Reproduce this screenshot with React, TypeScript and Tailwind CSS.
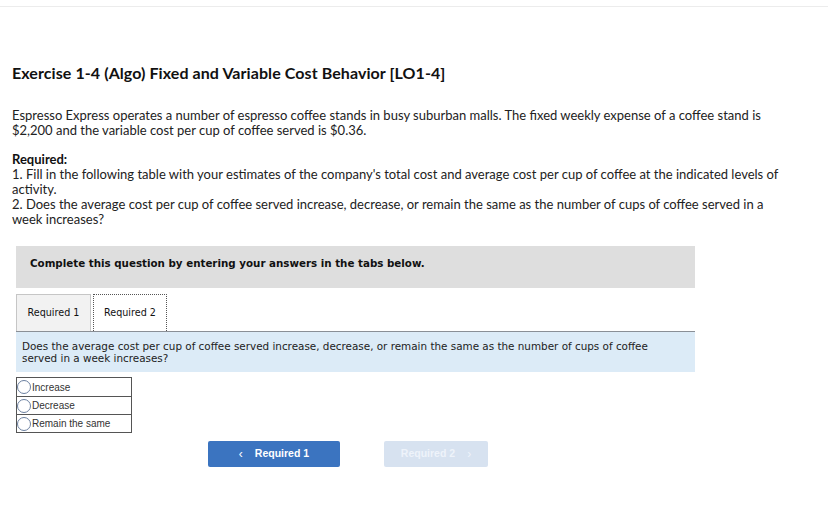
import React from "react";

const options = ["Increase", "Decrease", "Remain the same"];

export default function App() {
  return (
    <div className="w-[828px] h-[519px] bg-white overflow-hidden text-[#111]">
      <div className="h-[7px] border-b border-[#ececec]" />
      <div className="px-3 pt-[56px]" style={{ fontFamily: "Lato, 'Open Sans', sans-serif" }}>
        <h1 className="text-[16px] font-bold leading-5 tracking-[0.08px]">
          Exercise 1-4 (Algo) Fixed and Variable Cost Behavior [LO1-4]
        </h1>
        <div className="w-[768px]">
          <p className="mt-[25px] text-[13px] leading-[15px] text-[#222]">
            Espresso Express operates a number of espresso coffee stands in busy suburban malls. The fixed weekly
            expense of a coffee stand is $2,200 and the variable cost per cup of coffee served is $0.36.
          </p>
          <p className="mt-[14px] text-[13px] leading-[15px] font-bold">Required:</p>
          <p className="text-[13px] leading-[15px] text-[#222]">
            1. Fill in the following table with your estimates of the company's total cost and average cost per cup
            of coffee at the indicated levels of activity.
            <br />
            2. Does the average cost per cup of coffee served increase, decrease, or remain the same as the number
            of cups of coffee served in a week increases?
          </p>
        </div>
      </div>

      <div className="ml-4 w-[679px] mt-[19px]" style={{ fontFamily: "'DejaVu Sans', Verdana, sans-serif" }}>
        <div className="h-[42px] bg-[#dedede] pl-[14px] pt-[10px] text-[10.3px] leading-[14px] font-bold">
          Complete this question by entering your answers in the tabs below.
        </div>
        <div className="mt-[6px] flex items-end border-b border-[#8a8f96] h-[38px]">
          <div className="h-[37px] w-[75px] bg-[#f2f2f2] border border-b-0 border-[#c6c6c6] flex items-center justify-center text-[9.6px]">
            Required 1
          </div>
          <div className="ml-[2px] h-[37px] w-[74px] bg-white border border-dotted border-b-0 border-[#555] flex items-center justify-center text-[9.6px]">
            Required 2
          </div>
        </div>
        <div className="h-[40px] bg-[#dcebf7] pl-[6px] pt-[8px] text-[10.4px] leading-[12px] text-[#222]">
          Does the average cost per cup of coffee served increase, decrease, or remain the same as the number of cups
          of coffee
          <br />
          served in a week increases?
        </div>
        <div className="mt-[5px] w-[116px] border border-[#555]" style={{ fontFamily: "'Liberation Sans', Arial, sans-serif" }}>
          {options.map((o, i) => (
            <div
              key={o}
              className={`h-[18px] flex items-center text-[10px] text-[#333] ${i > 0 ? "border-t border-[#555]" : ""}`}
            >
              <span className="w-[14px] h-[14px] rounded-full border border-[#6b7fa0] bg-white mr-[1px]" />
              {o}
            </div>
          ))}
        </div>
        <div className="mt-[8px] flex ml-[192px] gap-[44px]" style={{ fontFamily: "'Liberation Sans', Arial, sans-serif" }}>
          <div className="w-[132px] h-[26px] bg-[#3b74c0] rounded-[2px] flex items-center justify-center text-white text-[10.5px] font-bold">
            <span className="mr-[12px] text-[12px] font-normal">‹</span>Required 1
          </div>
          <div className="w-[104px] h-[26px] bg-[#d7e2f0] rounded-[2px] flex items-center justify-center text-[#eef3fa] text-[10.5px] font-bold">
            Required 2<span className="ml-[12px] text-[12px] font-normal">›</span>
          </div>
        </div>
      </div>
    </div>
  );
}
